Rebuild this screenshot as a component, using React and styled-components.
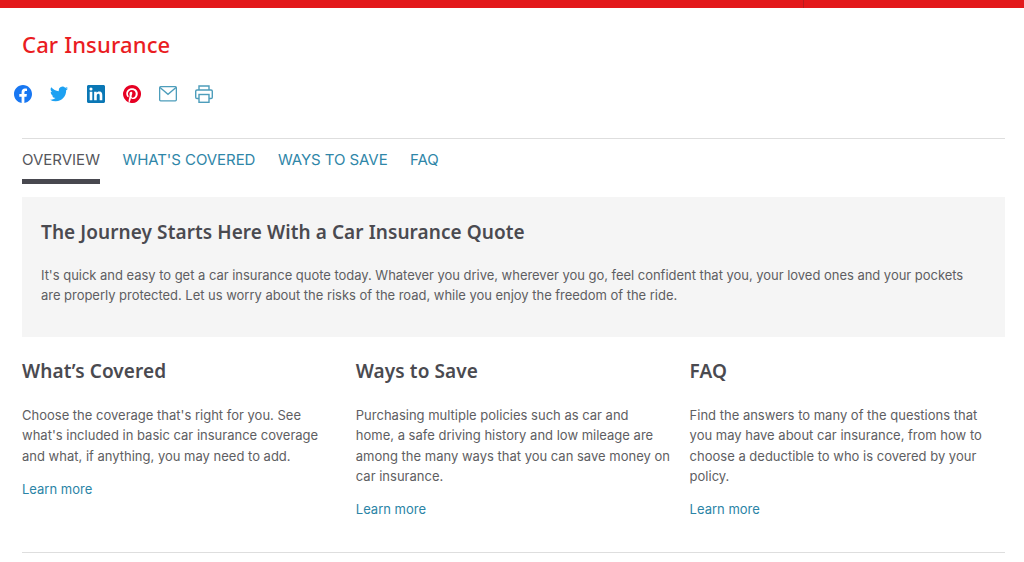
import React from "react";
import styled, { createGlobalStyle } from "styled-components";

const Global = createGlobalStyle`
  html, body { margin: 0; padding: 0; background: #fff; }
  body { font-family: "Inter", "Liberation Sans", sans-serif; color: #555; overflow: hidden; }
  * { box-sizing: border-box; }
`;

const Page = styled.div`
  width: 1024px;
  height: 562px;
  overflow: hidden;
`;

const TopBar = styled.div`
  height: 8px;
  background: #e3191b;
  display: flex;
  justify-content: flex-end;
  padding-right: 220px;
`;

const TopBarTick = styled.span`
  width: 1px;
  background: #b81c1e;
`;

const Main = styled.main`
  padding: 0 19px 0 22px;
`;

const Title = styled.h1`
  margin: 0;
  padding-top: 23px;
  font: 500 22px/26px "Noto Sans", sans-serif;
  letter-spacing: 0.16px;
  color: #ea1c22;
`;

const Share = styled.div`
  display: flex;
  gap: 18.25px;
  margin: 28px 0 0 -8px;
  height: 18px;
`;

const Rule = styled.hr`
  margin: 0;
  border: 0;
  height: 1px;
  background: #dedede;
`;

const TopRule = styled(Rule)`
  margin-top: 35px;
`;

const Tabs = styled.nav`
  display: flex;
  gap: 22.5px;
  height: 45px;
`;

const Tab = styled.a`
  display: block;
  padding-top: 12px;
  font: 400 15px/18px "Inter", sans-serif;
  letter-spacing: ${(p) => (p.$active ? "0" : "-0.06px")};
  color: ${(p) => (p.$active ? "#55565c" : "#2f86a8")};
  border-bottom: ${(p) => (p.$active ? "5px solid #48484f" : "0")};
`;

const Intro = styled.section`
  margin-top: 13px;
  height: 140px;
  background: #f5f5f5;
  padding: 23px 19px;
`;

const IntroTitle = styled.h2`
  margin: 0 0 21px;
  font: 600 19px/24px "Noto Sans", sans-serif;
  letter-spacing: 0.08px;
  color: #4a4a50;
`;

const Text = styled.p`
  margin: 0;
  font: 400 13px/20.3px "Inter", sans-serif;
  letter-spacing: ${(p) => (p.$tight ? "-0.03px" : "0")};
  color: #5e5e62;
  white-space: nowrap;
`;

const Columns = styled.section`
  display: grid;
  grid-template-columns: repeat(3, 314px);
  column-gap: 19.8px;
  height: 215px;
  padding-top: 22px;
`;

const Column = styled.article``;

const ColumnTitle = styled.h3`
  margin: 0 0 22px;
  font: 600 19px/24px "Noto Sans", sans-serif;
  letter-spacing: 0.1px;
  color: #4a4a50;
`;

const LearnMore = styled.a`
  display: block;
  margin-top: 13px;
  font: 400 13px/20px "Inter", sans-serif;
  color: #2b84a6;
`;

const Facebook = () => (
  <svg width="18" height="18" viewBox="0 0 24 24"><path fill="#1877f2" d="M24 12.07C24 5.4 18.63 0 12 0S0 5.4 0 12.07c0 6.03 4.39 11.02 10.13 11.93v-8.44H7.08v-3.49h3.05V9.41c0-3.02 1.79-4.69 4.53-4.69 1.31 0 2.69.24 2.69.24v2.97h-1.52c-1.49 0-1.96.93-1.96 1.89v2.25h3.33l-.53 3.49h-2.8V24C19.61 23.09 24 18.1 24 12.07z"/></svg>
);
const Twitter = () => (
  <svg width="18" height="18" viewBox="0 0 24 24"><path fill="#1da1f2" d="M24 4.56a9.8 9.8 0 0 1-2.83.78 4.93 4.93 0 0 0 2.17-2.72 9.9 9.9 0 0 1-3.13 1.19 4.92 4.92 0 0 0-8.39 4.49A14 14 0 0 1 1.67 3.15a4.93 4.93 0 0 0 1.52 6.57 4.9 4.9 0 0 1-2.23-.62v.06a4.92 4.92 0 0 0 3.95 4.83 4.9 4.9 0 0 1-2.22.08 4.93 4.93 0 0 0 4.6 3.42A9.9 9.9 0 0 1 0 19.54a13.94 13.94 0 0 0 7.55 2.21c9.06 0 14-7.5 14-14 0-.21 0-.42-.01-.63A10 10 0 0 0 24 4.56z"/></svg>
);
const Linkedin = () => (
  <svg width="18" height="18" viewBox="0 0 24 24"><path fill="#0a77b5" d="M22 0H2C.9 0 0 .9 0 2v20c0 1.100.9 2 2 2h20c1.100 0 2-.9 2-2V2c0-1.100-.9-2-2-2zM7.100 20.400H3.600V9h3.500v11.400zM5.300 7.400a2.100 2.100 0 1 1 0-4.200 2.100 2.100 0 0 1 0 4.200zM20.400 20.400h-3.500v-5.600c0-1.300 0-3-1.800-3s-2.100 1.400-2.100 2.900v5.700H9.500V9h3.400v1.600c.5-.9 1.600-1.800 3.300-1.800 3.600 0 4.200 2.400 4.200 5.400v6.200z"/></svg>
);
const Pinterest = () => (
  <svg width="18" height="18" viewBox="0 0 24 24"><path fill="#e60023" d="M12 0a12 12 0 0 0-4.370 23.170c-.1-.95-.2-2.400.04-3.440l1.400-5.970s-.36-.72-.36-1.780c0-1.670.97-2.910 2.170-2.910 1.020 0 1.520.77 1.520 1.690 0 1.030-.66 2.570-.99 3.990-.28 1.190.6 2.160 1.770 2.160 2.130 0 3.770-2.240 3.770-5.490 0-2.870-2.060-4.870-5-4.870-3.410 0-5.410 2.560-5.410 5.200 0 1.030.4 2.140.89 2.740.1.120.11.220.08.340l-.33 1.360c-.05.220-.18.270-.4.160-1.500-.7-2.440-2.890-2.440-4.650 0-3.780 2.750-7.260 7.920-7.260 4.160 0 7.390 2.970 7.390 6.930 0 4.130-2.610 7.460-6.230 7.460-1.210 0-2.360-.63-2.750-1.380l-.75 2.850c-.27 1.040-1 2.350-1.490 3.150A12 12 0 1 0 12 0z"/></svg>
);
const Mail = () => (
  <svg width="18" height="18" viewBox="0 0 18 18" fill="none" stroke="#4d9dbb" strokeWidth="1.300"><rect x="0.650" y="1.650" width="16.700" height="14.200" rx="1"/><path d="M1 2.500l8 6.800 8-6.800"/></svg>
);
const Printer = () => (
  <svg width="18" height="18" viewBox="0 0 18 18" fill="none" stroke="#4d9dbb" strokeWidth="1.400"><path d="M4 5V1h10v4"/><path d="M4 13.500H2a1.300 1.300 0 0 1-1.300-1.300V6.300A1.300 1.300 0 0 1 2 5h14a1.300 1.300 0 0 1 1.300 1.300v5.900a1.300 1.300 0 0 1-1.300 1.300h-2"/><rect x="4" y="9.500" width="10" height="7.800"/></svg>
);

const columns = [
  { title: "What’s Covered", text: ["Choose the coverage that's right for you. See", "what's included in basic car insurance coverage", "and what, if anything, you may need to add."] },
  { title: "Ways to Save", text: ["Purchasing multiple policies such as car and", "home, a safe driving history and low mileage are", "among the many ways that you can save money on", "car insurance."] },
  { title: "FAQ", text: ["Find the answers to many of the questions that", "you may have about car insurance, from how to", "choose a deductible to who is covered by your", "policy."] },
];

export default function App() {
  return (
    <Page>
      <Global />
      <TopBar><TopBarTick /></TopBar>
      <Main>
        <Title>Car Insurance</Title>
        <Share>
          <Facebook /><Twitter /><Linkedin /><Pinterest /><Mail /><Printer />
        </Share>
        <TopRule />
        <Tabs>
          <Tab $active>OVERVIEW</Tab>
          <Tab>WHAT'S COVERED</Tab>
          <Tab>WAYS TO SAVE</Tab>
          <Tab>FAQ</Tab>
        </Tabs>
        <Intro>
          <IntroTitle>The Journey Starts Here With a Car Insurance Quote</IntroTitle>
          <Text $tight>
            It's quick and easy to get a car insurance quote today. Whatever you drive, wherever you go, feel confident that you, your loved ones and your pockets<br />
            are properly protected. Let us worry about the risks of the road, while you enjoy the freedom of the ride.
          </Text>
        </Intro>
        <Columns>
          {columns.map((c) => (
            <Column key={c.title}>
              <ColumnTitle>{c.title}</ColumnTitle>
              <Text>
                {c.text.map((l) => (
                  <React.Fragment key={l}>{l}<br /></React.Fragment>
                ))}
              </Text>
              <LearnMore>Learn more</LearnMore>
            </Column>
          ))}
        </Columns>
        <Rule />
      </Main>
    </Page>
  );
}
